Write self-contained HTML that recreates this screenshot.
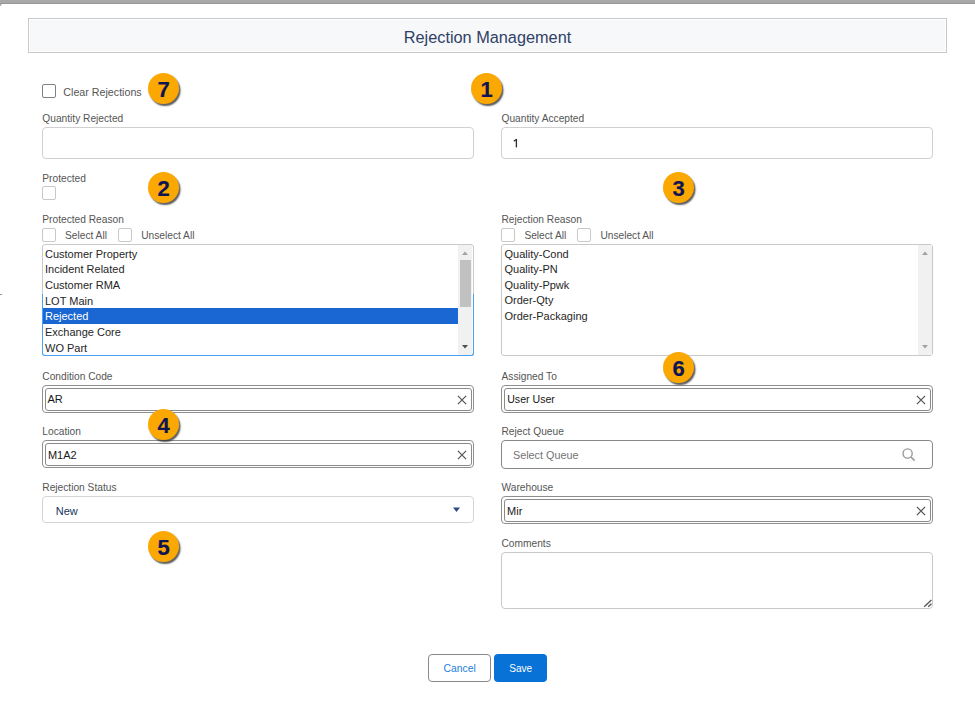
<!DOCTYPE html>
<html><head><meta charset="utf-8">
<style>
:root{--lbl:#555;}
html,body{margin:0;padding:0;width:975px;height:703px;overflow:hidden;background:#fff;}
body{position:relative;font-family:"Liberation Sans",sans-serif;}
.a{position:absolute;}
.t{position:absolute;white-space:nowrap;line-height:1;}
.box{position:absolute;box-sizing:border-box;background:#fff;}
.cb{position:absolute;box-sizing:border-box;width:14px;height:14px;border:1px solid #c9c9c9;border-radius:2px;background:#fff;}
.badge{position:absolute;width:31px;height:31px;border-radius:50%;background:#fba802;box-shadow:1.5px 2px 1.5px rgba(40,40,40,.75);}
.badge span{position:absolute;left:0;right:0;top:0.8px;text-align:center;font:bold 22px/31px "Liberation Sans",sans-serif;color:#0f1552;-webkit-text-stroke:0.2px #0f1552;}
</style></head><body>
<div class="a" style="left:0;top:0;width:975px;height:3px;background:#a8a8a8;"></div>
<div class="a" style="left:0;top:3px;width:975px;height:1px;background:#979797;"></div>
<div class="a" style="left:0;top:4px;width:1px;height:2px;background:#aaa;"></div>
<div class="a" style="left:1px;top:4px;width:1px;height:1px;background:#ccc;"></div>
<div class="box" style="left:28px;top:18px;width:919px;height:35px;border:1px solid #c9c9c9;background:#f7f8fa;box-shadow:inset 0 0 0 1px #fff;"></div>
<div class="t" style="left:0;width:975px;text-align:center;top:28.9px;font-size:16.3px;color:#2f4166;">Rejection Management</div>
<div class="cb" style="left:42px;top:84px;border-color:#808080;border-radius:2px;"></div>
<div class="t" style="left:63.3px;top:86.74px;font-size:10.7px;color:var(--lbl);">Clear Rejections</div>
<div class="t" style="left:42.3px;top:114.37px;font-size:10.2px;color:var(--lbl);">Quantity Rejected</div>
<div class="box" style="left:42px;top:127px;width:432px;height:32px;border:1px solid #d0d0d0;border-radius:4px;"></div>
<div class="t" style="left:501.5px;top:114.37px;font-size:10.2px;color:var(--lbl);">Quantity Accepted</div>
<div class="box" style="left:501px;top:127px;width:432px;height:32px;border:1px solid #d0d0d0;border-radius:4px;"></div>
<svg class="a" style="left:510px;top:135px" width="12" height="16"><path d="M6.4 4 V12.4" stroke="#2a2a2a" stroke-width="1.3" fill="none"/><path d="M6.6 4.3 L3.8 6.2" stroke="#2a2a2a" stroke-width="1.2" fill="none"/></svg>
<div class="t" style="left:42.3px;top:173.67px;font-size:10.2px;color:var(--lbl);">Protected</div>
<div class="cb" style="left:42px;top:186px;border-color:#c9c9c9;border-radius:2px;"></div>
<div class="t" style="left:42.3px;top:215.17px;font-size:10.2px;color:var(--lbl);">Protected Reason</div>
<div class="cb" style="left:42px;top:228px;border-color:#c9c9c9;border-radius:2px;"></div>
<div class="t" style="left:65px;top:230.57px;font-size:10.2px;color:var(--lbl);">Select All</div>
<div class="cb" style="left:118px;top:228px;border-color:#c9c9c9;border-radius:2px;"></div>
<div class="t" style="left:141.2px;top:230.57px;font-size:10.2px;color:var(--lbl);">Unselect All</div>
<div class="t" style="left:501.5px;top:215.17px;font-size:10.2px;color:var(--lbl);">Rejection Reason</div>
<div class="cb" style="left:501px;top:228px;border-color:#c9c9c9;border-radius:2px;"></div>
<div class="t" style="left:524.4px;top:230.57px;font-size:10.2px;color:var(--lbl);">Select All</div>
<div class="cb" style="left:577px;top:228px;border-color:#c9c9c9;border-radius:2px;"></div>
<div class="t" style="left:600.4px;top:230.57px;font-size:10.2px;color:var(--lbl);">Unselect All</div>
<div class="box" style="left:42px;top:244px;width:432px;height:112px;border:1px solid #c9c9c9;border-radius:3px;"></div>
<div class="box" style="left:501px;top:244px;width:432px;height:112px;border:1px solid #c9c9c9;border-radius:3px;"></div>
<div class="a" style="left:43px;top:308px;width:415px;height:15.5px;background:#1a66d2;"></div>
<div class="t" style="left:45.0px;top:248.69px;font-size:11.0px;color:#262626;">Customer Property</div>
<div class="t" style="left:45.0px;top:264.49px;font-size:11.0px;color:#262626;">Incident Related</div>
<div class="t" style="left:45.0px;top:280.29px;font-size:11.0px;color:#262626;">Customer RMA</div>
<div class="t" style="left:45.0px;top:295.89px;font-size:11.0px;color:#262626;">LOT Main</div>
<div class="t" style="left:45.0px;top:311.29px;font-size:11.0px;color:#fff;">Rejected</div>
<div class="t" style="left:45.0px;top:327.09px;font-size:11.0px;color:#262626;">Exchange Core</div>
<div class="t" style="left:45.0px;top:342.69px;font-size:11.0px;color:#262626;">WO Part</div>
<div class="a" style="left:458px;top:245px;width:14px;height:110px;background:#f1f1f1;"></div>
<div class="a" style="left:460px;top:260px;width:11px;height:47px;background:#c1c1c1;"></div>
<svg class="a" style="left:458px;top:245px" width="14" height="110"><path d="M4 10 L7 6.5 L10 10 Z" fill="#a3a3a3"/><path d="M4 100 L7 103.5 L10 100 Z" fill="#505050"/></svg>
<div class="a" style="left:42px;top:294px;width:432px;height:62px;box-sizing:border-box;border:1px solid #4aa0f5;border-top:none;border-radius:0 0 3px 3px;"></div>
<div class="t" style="left:504.5px;top:248.59px;font-size:11.0px;color:#262626;">Quality-Cond</div>
<div class="t" style="left:504.5px;top:264.19px;font-size:11.0px;color:#262626;">Quality-PN</div>
<div class="t" style="left:504.5px;top:279.79px;font-size:11.0px;color:#262626;">Quality-Ppwk</div>
<div class="t" style="left:504.5px;top:295.39px;font-size:11.0px;color:#262626;">Order-Qty</div>
<div class="t" style="left:504.5px;top:310.99px;font-size:11.0px;color:#262626;">Order-Packaging</div>
<div class="a" style="left:918px;top:245px;width:14px;height:110px;background:#f1f1f1;"></div>
<svg class="a" style="left:918px;top:245px" width="14" height="110"><path d="M4 10 L7 6.5 L10 10 Z" fill="#a3a3a3"/><path d="M4 100 L7 103.5 L10 100 Z" fill="#a3a3a3"/></svg>
<div class="t" style="left:42.3px;top:371.77px;font-size:10.2px;color:var(--lbl);">Condition Code</div>
<div class="box" style="left:42px;top:385px;width:432px;height:28px;border:1.5px solid #8f8f8f;border-radius:4px;"></div>
<div class="box" style="left:44.5px;top:387.5px;width:427px;height:23px;border:1.2px solid #8a8a8a;border-radius:3px;"></div>
<div class="t" style="left:47.5px;top:393.59px;font-size:11px;color:#181818;">AR</div>
<svg class="a" style="left:456.5px;top:394.8px" width="10" height="10"><path d="M0.9 0.9 L9.1 9.1 M9.1 0.9 L0.9 9.1" stroke="#555" stroke-width="1.25" fill="none"/></svg>
<div class="t" style="left:501.5px;top:371.67px;font-size:10.2px;color:var(--lbl);">Assigned To</div>
<div class="box" style="left:501px;top:385px;width:432px;height:28px;border:1.5px solid #8f8f8f;border-radius:4px;"></div>
<div class="box" style="left:503.5px;top:387.5px;width:427px;height:23px;border:1.2px solid #8a8a8a;border-radius:3px;"></div>
<div class="t" style="left:507.2px;top:394.33px;font-size:10.6px;color:#181818;">User User</div>
<svg class="a" style="left:916.1px;top:394.8px" width="10" height="10"><path d="M0.9 0.9 L9.1 9.1 M9.1 0.9 L0.9 9.1" stroke="#555" stroke-width="1.25" fill="none"/></svg>
<div class="t" style="left:42.3px;top:427.37px;font-size:10.2px;color:var(--lbl);">Location</div>
<div class="box" style="left:42px;top:440px;width:432px;height:28px;border:1.5px solid #8f8f8f;border-radius:4px;"></div>
<div class="box" style="left:44.5px;top:442.5px;width:427px;height:23px;border:1.2px solid #8a8a8a;border-radius:3px;"></div>
<div class="t" style="left:47.9px;top:450.29px;font-size:11px;color:#181818;">M1A2</div>
<svg class="a" style="left:456.5px;top:450.3px" width="10" height="10"><path d="M0.9 0.9 L9.1 9.1 M9.1 0.9 L0.9 9.1" stroke="#555" stroke-width="1.25" fill="none"/></svg>
<div class="t" style="left:501.5px;top:426.97px;font-size:10.2px;color:var(--lbl);">Reject Queue</div>
<div class="box" style="left:501px;top:440px;width:432px;height:28.5px;border:1.7px solid #888;border-radius:4px;"></div>
<div class="t" style="left:513px;top:450.46px;font-size:10.8px;color:#737373;">Select Queue</div>
<svg class="a" style="left:900px;top:445.5px" width="18" height="18"><circle cx="7.6" cy="7.5" r="4.6" stroke="#9a9a9a" stroke-width="1.4" fill="none"/><path d="M11 11 L14.6 14.6" stroke="#9a9a9a" stroke-width="1.6"/></svg>
<div class="t" style="left:42.3px;top:482.87px;font-size:10.2px;color:var(--lbl);">Rejection Status</div>
<div class="box" style="left:42px;top:496px;width:432px;height:27px;border:1px solid #d4d4d4;border-radius:4px;"></div>
<div class="t" style="left:55.7px;top:506.49px;font-size:11px;color:#16325c;">New</div>
<svg class="a" style="left:452px;top:506px" width="9" height="7"><path d="M1 1.5 L8 1.5 L4.5 6 Z" fill="#2b4b82"/></svg>
<div class="t" style="left:501.5px;top:482.77px;font-size:10.2px;color:var(--lbl);">Warehouse</div>
<div class="box" style="left:501px;top:496px;width:432px;height:28px;border:1.5px solid #8f8f8f;border-radius:4px;"></div>
<div class="box" style="left:503.5px;top:498.5px;width:427px;height:23px;border:1.2px solid #8a8a8a;border-radius:3px;"></div>
<div class="t" style="left:507.1px;top:506.19px;font-size:11px;color:#181818;">Mir</div>
<svg class="a" style="left:916.1px;top:506.3px" width="10" height="10"><path d="M0.9 0.9 L9.1 9.1 M9.1 0.9 L0.9 9.1" stroke="#555" stroke-width="1.25" fill="none"/></svg>
<div class="t" style="left:501.5px;top:538.87px;font-size:10.2px;color:var(--lbl);">Comments</div>
<div class="box" style="left:501px;top:552px;width:432px;height:57px;border:1px solid #c9c9c9;border-radius:4px;"></div>
<svg class="a" style="left:922px;top:598px" width="11" height="10"><path d="M2.2 8.8 L9.4 2" stroke="#555" stroke-width="1.3"/><path d="M6.2 8.8 L9.4 5.8" stroke="#555" stroke-width="1.3"/></svg>
<div class="box" style="left:428px;top:654px;width:63px;height:28px;border:1px solid #8a8a8a;border-radius:4px;"></div>
<div class="t" style="left:443.4px;top:664.40px;font-size:10.4px;color:#1b7fdf;">Cancel</div>
<div class="box" style="left:494.3px;top:654px;width:52.7px;height:28px;background:#0872d6;border-radius:4px;"></div>
<div class="t" style="left:509.2px;top:663.95px;font-size:10.1px;color:#fff;">Save</div>
<div class="badge" style="left:148.0px;top:72.9px;"><span>7</span></div>
<div class="badge" style="left:471.0px;top:72.9px;"><span>1</span></div>
<div class="badge" style="left:148.0px;top:172.1px;"><span>2</span></div>
<div class="badge" style="left:663.1px;top:172.1px;"><span>3</span></div>
<div class="badge" style="left:148.1px;top:409.3px;"><span>4</span></div>
<div class="badge" style="left:148.1px;top:531.1px;"><span>5</span></div>
<div class="badge" style="left:663.1px;top:352.0px;"><span>6</span></div>
<div class="a" style="left:0;top:294px;width:2px;height:1px;background:#999;"></div>
</body></html>
